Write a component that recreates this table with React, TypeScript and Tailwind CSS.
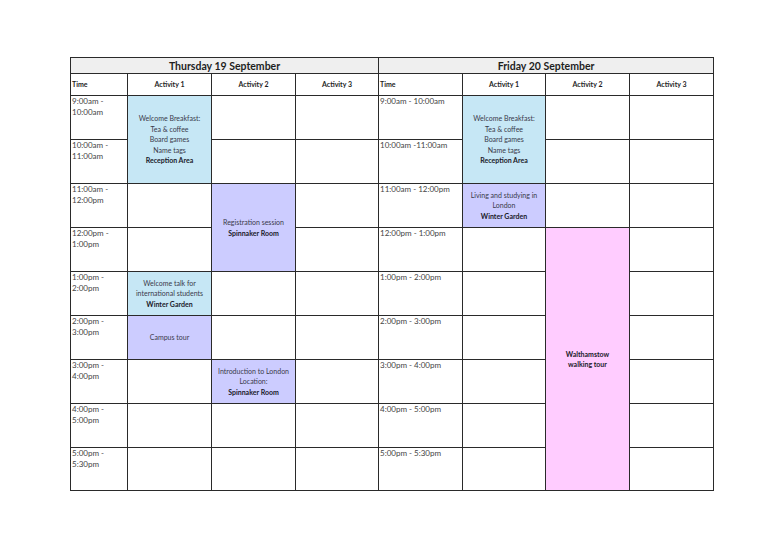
import React from "react";

type Cell = { span?: number; bg?: string; lines?: { t: string; b?: boolean }[] } | null;

const thuTimes = [
  ["9:00am -", "10:00am"],
  ["10:00am -", "11:00am"],
  ["11:00am -", "12:00pm"],
  ["12:00pm -", "1:00pm"],
  ["1:00pm -", "2:00pm"],
  ["2:00pm -", "3:00pm"],
  ["3:00pm -", "4:00pm"],
  ["4:00pm -", "5:00pm"],
  ["5:00pm -", "5:30pm"],
];
const friTimes = [
  "9:00am - 10:00am",
  "10:00am -11:00am",
  "11:00am - 12:00pm",
  "12:00pm - 1:00pm",
  "1:00pm - 2:00pm",
  "2:00pm - 3:00pm",
  "3:00pm - 4:00pm",
  "4:00pm - 5:00pm",
  "5:00pm - 5:30pm",
];

const BLUE = "bg-[#c6e7f5]";
const PURPLE = "bg-[#ccccff]";
const PINK = "bg-[#ffccff]";

const welcome = [
  { t: "Welcome Breakfast:" },
  { t: "Tea & coffee" },
  { t: "Board games" },
  { t: "Name tags" },
  { t: "Reception Area", b: true },
];

type G = (Cell | "skip")[][];
const grid: G = Array.from({ length: 9 }, () => Array.from({ length: 6 }, () => null as Cell | "skip"));
function place(r: number, c: number, cell: Cell & object) {
  grid[r][c] = cell;
  for (let i = 1; i < (cell.span ?? 1); i++) grid[r + i][c] = "skip";
}
place(0, 0, { span: 2, bg: BLUE, lines: welcome });
place(2, 1, { span: 2, bg: PURPLE, lines: [{ t: "Registration session" }, { t: "Spinnaker Room", b: true }] });
place(4, 0, { span: 1, bg: BLUE, lines: [{ t: "Welcome talk for" }, { t: "international students" }, { t: "Winter Garden", b: true }] });
place(5, 0, { span: 1, bg: PURPLE, lines: [{ t: "Campus tour" }] });
place(6, 1, { span: 1, bg: PURPLE, lines: [{ t: "Introduction to London" }, { t: "Location:" }, { t: "Spinnaker Room", b: true }] });
place(0, 3, { span: 2, bg: BLUE, lines: welcome });
place(2, 3, { span: 1, bg: PURPLE, lines: [{ t: "Living and studying in" }, { t: "London" }, { t: "Winter Garden", b: true }] });
place(3, 4, { span: 6, bg: PINK, lines: [{ t: "Walthamstow", b: true }, { t: "walking tour", b: true }] });

const bd = "border border-[#2a2a2a]";

function ActCell({ cell }: { cell: Cell | "skip" }) {
  if (cell === "skip") return null;
  if (!cell) return <td className={bd}></td>;
  return (
    <td rowSpan={cell.span ?? 1} className={`${bd} ${cell.bg} text-center align-middle`}>
      <div className="flex flex-col items-center text-[7px] leading-[10.5px] text-[#3a3a4a]">
        {cell.lines?.map((l, i) => (
          <span key={i} className={l.b ? "font-bold text-[#1a1a2a]" : ""}>
            {l.t}
          </span>
        ))}
      </div>
    </td>
  );
}

export default function App() {
  const rowH = [44, 44, 44, 44, 44, 44, 44, 44, 43];
  return (
    <div className="w-[768px] h-[543px] bg-white pt-[57px] pl-[70px]" style={{ fontFamily: "Lato, 'Liberation Sans', sans-serif" }}>
      <table className="table-fixed border-collapse w-[643px]">
        <colgroup>
          <col className="w-[57px]" />
          <col className="w-[84px]" />
          <col className="w-[84px]" />
          <col className="w-[83px]" />
          <col className="w-[84px]" />
          <col className="w-[83px]" />
          <col className="w-[84px]" />
          <col className="w-[84px]" />
        </colgroup>
        <tbody>
          <tr className="h-[16px]">
            <td colSpan={4} className={`${bd} bg-[#efefef] text-center text-[10.5px] font-bold text-[#1e1e1e] leading-[14px] p-0`}>
              Thursday 19 September
            </td>
            <td colSpan={4} className={`${bd} bg-[#efefef] text-center text-[10.5px] font-bold text-[#1e1e1e] leading-[14px] p-0`}>
              Friday 20 September
            </td>
          </tr>
          <tr className="h-[22px]">
            {[0, 1].map((d) => (
              <React.Fragment key={d}>
                <td className={`${bd} text-left pl-px text-[7px] font-bold text-[#1e1e1e]`}>Time</td>
                <td className={`${bd} text-center text-[7px] font-bold text-[#1e1e1e]`}>Activity 1</td>
                <td className={`${bd} text-center text-[7px] font-bold text-[#1e1e1e]`}>Activity 2</td>
                <td className={`${bd} text-center text-[7px] font-bold text-[#1e1e1e]`}>Activity 3</td>
              </React.Fragment>
            ))}
          </tr>
          {rowH.map((h, r) => (
            <tr key={r} style={{ height: h }}>
              <td className={`${bd} align-top pl-px pt-0 text-[8px] leading-[11px] text-[#444]`}>
                <div>{thuTimes[r][0]}</div>
                <div>{thuTimes[r][1]}</div>
              </td>
              <ActCell cell={grid[r][0]} />
              <ActCell cell={grid[r][1]} />
              <ActCell cell={grid[r][2]} />
              <td className={`${bd} align-top pl-px pt-0 text-[8px] leading-[11px] text-[#444]`}>
                <div>{friTimes[r]}</div>
              </td>
              <ActCell cell={grid[r][3]} />
              <ActCell cell={grid[r][4]} />
              <ActCell cell={grid[r][5]} />
            </tr>
          ))}
        </tbody>
      </table>
    </div>
  );
}
